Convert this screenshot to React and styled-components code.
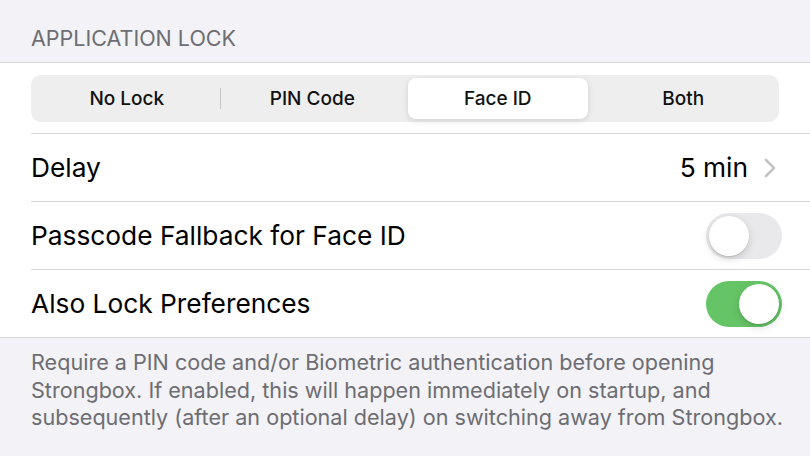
import React from "react";
import styled, { createGlobalStyle } from "styled-components";

const Global = createGlobalStyle`
  html, body { margin: 0; padding: 0; background: #f2f2f7; }
  body { font-family: "Inter", "Liberation Sans", sans-serif; -webkit-font-smoothing: antialiased; }
`;

const Page = styled.div`
  width: 810px;
  height: 456px;
  background: #f2f2f7;
  overflow: hidden;
`;

const SectionHeader = styled.div`
  box-sizing: border-box;
  padding: 25px 31px 0;
  height: 63px;
  font-size: 21.5px;
  line-height: 26px;
  color: #6d6d72;
  border-bottom: 1px solid #d6d6da;
`;

const Section = styled.div`
  background: #fff;
  border-bottom: 1px solid #d6d6da;
`;

const SegmentRow = styled.div`
  padding: 12px 31px 11px;
`;

const Segmented = styled.div`
  display: grid;
  grid-template-columns: repeat(4, 1fr);
  height: 47px;
  background: #eeeeef;
  border-radius: 10px;
  padding: 3px;
  box-sizing: border-box;
`;

const Segment = styled.div`
  position: relative;
  display: flex;
  align-items: center;
  justify-content: center;
  font-size: 19px;
  font-weight: 500;
  color: #111;
  border-radius: 8px;
  margin: ${(p) => (p.$active ? "0 3px" : "0")};
  background: ${(p) => (p.$active ? "#fff" : "transparent")};
  box-shadow: ${(p) => (p.$active ? "0 2px 6px rgba(0,0,0,0.12), 0 0 1px rgba(0,0,0,0.06)" : "none")};
  &::before {
    content: "";
    display: ${(p) => (p.$divider ? "block" : "none")};
    position: absolute;
    left: 0;
    top: 10px;
    bottom: 10px;
    width: 1px;
    background: #c8c8cc;
  }
`;

const Row = styled.div`
  display: flex;
  align-items: center;
  height: 67px;
  margin-left: 31px;
  padding-right: 28px;
  border-top: 1px solid #d6d6da;
  font-size: 26.3px;
  color: #000;
`;

const Label = styled.div`
  flex: 1;
`;

const Value = styled.div`
  display: flex;
  align-items: center;
  gap: 16px;
  color: #000;
  padding-right: 6px;
`;

const Toggle = styled.div`
  position: relative;
  width: 76px;
  height: 46px;
  border-radius: 23px;
  background: ${(p) => (p.$on ? "#65c466" : "#e9e9eb")};
  &::after {
    content: "";
    position: absolute;
    top: 3px;
    left: ${(p) => (p.$on ? "33px" : "3px")};
    width: 40px;
    height: 40px;
    border-radius: 50%;
    background: #fff;
    box-shadow: 0 3px 8px rgba(0,0,0,0.15), 0 1px 1px rgba(0,0,0,0.12);
  }
`;

const Footer = styled.div`
  padding: 11px 20px 0 31px;
  font-size: 21.6px;
  line-height: 27.5px;
  color: #6d6d72;
`;

const Chevron = () => (
  <svg width="12" height="20" viewBox="0 0 12 20">
    <path d="M2 2 L10 10 L2 18" fill="none" stroke="#c4c4c7" strokeWidth="2.6" strokeLinecap="round" strokeLinejoin="round" />
  </svg>
);

export default function App() {
  const segs = ["No Lock", "PIN Code", "Face ID", "Both"];
  const active = 2;
  return (
    <Page>
      <Global />
      <SectionHeader>APPLICATION LOCK</SectionHeader>
      <Section>
        <SegmentRow>
          <Segmented>
            {segs.map((s, i) => (
              <Segment
                key={s}
                $active={i === active}
                $divider={i > 0 && i !== active && i - 1 !== active}
              >
                {s}
              </Segment>
            ))}
          </Segmented>
        </SegmentRow>
        <Row>
          <Label>Delay</Label>
          <Value>
            5 min
            <Chevron />
          </Value>
        </Row>
        <Row>
          <Label>Passcode Fallback for Face ID</Label>
          <Toggle />
        </Row>
        <Row>
          <Label>Also Lock Preferences</Label>
          <Toggle $on />
        </Row>
      </Section>
      <Footer>
        Require a PIN code and/or Biometric authentication before opening Strongbox. If enabled, this will happen immediately on startup, and subsequently (after an optional delay) on switching away from Strongbox.
      </Footer>
    </Page>
  );
}
